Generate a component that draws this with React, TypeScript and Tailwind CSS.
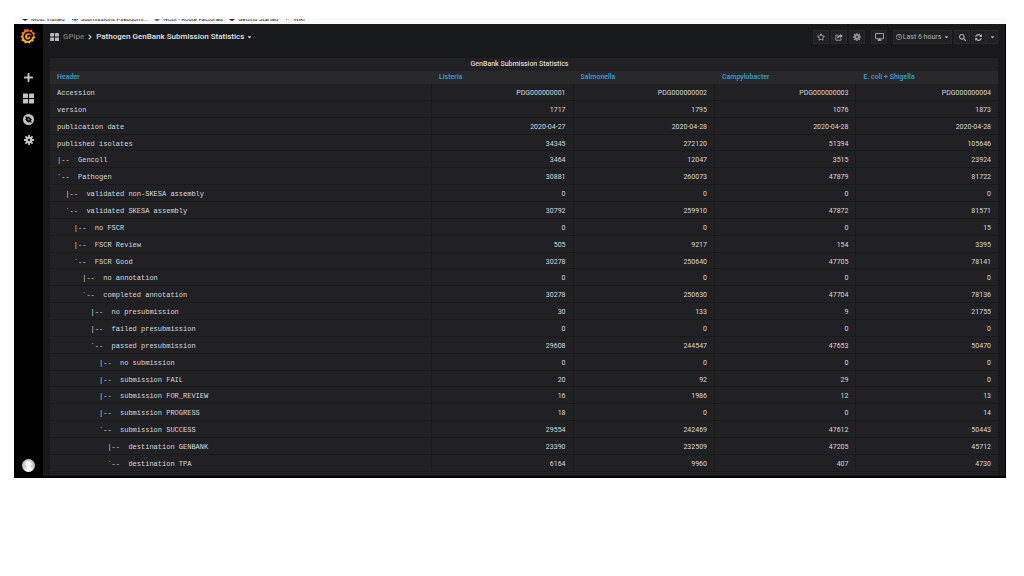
import React from 'react';
import { FaPlus, FaRegStar, FaSearch, FaCaretDown, FaCog, FaRegClock, FaSyncAlt, FaGlobe, FaWikipediaW, FaFirefox, FaChevronRight } from 'react-icons/fa';

interface Row {
  label: string;
  values: string[];
}

const columns = ['Listeria', 'Salmonella', 'Campylobacter', 'E. coli + Shigella'];

const rows: Row[] = [
  { label: 'Accession', values: ['PDG000000001', 'PDG000000002', 'PDG000000003', 'PDG000000004'] },
  { label: 'version', values: ['1717', '1795', '1076', '1873'] },
  { label: 'publication date', values: ['2020-04-27', '2020-04-28', '2020-04-28', '2020-04-28'] },
  { label: 'published isolates', values: ['34345', '272120', '51394', '105646'] },
  { label: '|--  Gencoll', values: ['3464', '12047', '3515', '23924'] },
  { label: '`--  Pathogen', values: ['30881', '260073', '47879', '81722'] },
  { label: '  |--  validated non-SKESA assembly', values: ['0', '0', '0', '0'] },
  { label: '  `--  validated SKESA assembly', values: ['30792', '259910', '47872', '81571'] },
  { label: '    |--  no FSCR', values: ['0', '0', '0', '15'] },
  { label: '    |--  FSCR Review', values: ['505', '9217', '154', '3395'] },
  { label: '    `--  FSCR Good', values: ['30278', '250640', '47705', '78141'] },
  { label: '      |--  no annotation', values: ['0', '0', '0', '0'] },
  { label: '      `--  completed annotation', values: ['30278', '250630', '47704', '78136'] },
  { label: '        |--  no presubmission', values: ['30', '133', '9', '21755'] },
  { label: '        |--  failed presubmission', values: ['0', '0', '0', '0'] },
  { label: '        `--  passed presubmission', values: ['29608', '244547', '47653', '50470'] },
  { label: '          |--  no submission', values: ['0', '0', '0', '0'] },
  { label: '          |--  submission FAIL', values: ['20', '92', '29', '0'] },
  { label: '          |--  submission FOR_REVIEW', values: ['16', '1986', '12', '13'] },
  { label: '          |--  submission PROGRESS', values: ['18', '0', '0', '14'] },
  { label: '          `--  submission SUCCESS', values: ['29554', '242469', '47612', '50443'] },
  { label: '            |--  destination GENBANK', values: ['23390', '232509', '47205', '45712'] },
  { label: '            `--  destination TPA', values: ['6164', '9960', '407', '4730'] },
];

const GrafanaLogo: React.FC = () => (
  <svg viewBox="0 0 32 32" className="w-4 h-4" fill="none">
    <defs>
      <linearGradient id="flame" x1="0" y1="1" x2="0" y2="0">
        <stop offset="0" stopColor="#fcc81c" />
        <stop offset="1" stopColor="#f0562a" />
      </linearGradient>
    </defs>
    <path
      d="M15 1l4 4 5-2 1 5 5 2-2 5 3 4-4 3 0 5-5 0-3 4-4-2-5 2-2-4-5-1 1-5-3-4 3-3-1-5 5-2 1-5 5 1z"
      fill="url(#flame)"
    />
    <path
      d="M25 16c-1-5-5-8-10-7-5 1-8 6-6 11 2 5 8 6 12 2 3-3 1-7-2-7-2 0-4 1-3 3"
      stroke="#000"
      strokeWidth="3"
      strokeLinecap="round"
    />
  </svg>
);

const GridIcon: React.FC<{ className: string }> = ({ className }) => (
  <svg viewBox="0 0 20 18" className={className} fill="currentColor">
    <rect x="0" y="0" width="9" height="8" rx="1" />
    <rect x="11" y="0" width="9" height="8" rx="1" />
    <rect x="0" y="10" width="9" height="8" rx="1" />
    <rect x="11" y="10" width="9" height="8" rx="1" />
  </svg>
);

const ExploreIcon: React.FC = () => (
  <svg viewBox="0 0 20 20" className="w-[11px] h-[11px]">
    <circle cx="10" cy="10" r="10" fill="#c4c4c4" />
    <path d="M4 4l9 3 3 9-9-3z" fill="#000" />
    <path d="M10 4l6 6-6 6-6-6z" fill="#000" />
    <circle cx="10" cy="10" r="2" fill="#777" />
  </svg>
);

const CogIcon: React.FC<{ className: string }> = ({ className }) => (
  <svg viewBox="0 0 22 22" className={className} fill="none" stroke="currentColor">
    <circle cx="11" cy="11" r="5" strokeWidth="5" />
    <path d="M11 0v5M11 17v5M0 11h5M17 11h5M3 3l4 4M15 15l4 4M19 3l-4 4M7 15l-4 4" strokeWidth="4" />
  </svg>
);

const ShareIcon: React.FC = () => (
  <svg viewBox="0 0 20 18" className="w-2 h-[7px]" fill="none" stroke="currentColor" strokeWidth="2">
    <path d="M9 3H2v13h13v-5" />
    <path d="M7 11c0-4 3-6 7-6" strokeWidth="3" />
    <path d="M13 0l7 5-7 5z" fill="currentColor" stroke="none" />
  </svg>
);

const MonitorIcon: React.FC = () => (
  <svg viewBox="0 0 20 18" className="w-[9px] h-2" fill="none" stroke="currentColor" strokeWidth="2">
    <rect x="1" y="1" width="18" height="12" rx="1" />
    <path d="M6 16h8M10 13v3" strokeWidth="3" />
  </svg>
);

const BookmarksBar: React.FC = () => (
  <nav aria-label="Bookmarks" className="h-[6px] bg-[#fafafa] pt-px pl-2 text-[6px] text-[#222]">
    <div className="flex h-[2px] items-end gap-[6px] overflow-hidden leading-[4px]">
      <a href="#visited" className="flex items-end gap-[3px] whitespace-nowrap"><FaCog className="w-[6px] h-[6px]" />Most Visited</a>
      <a href="#submissions" className="flex items-end gap-[2px] whitespace-nowrap"><FaGlobe className="w-2 h-2 text-[#27558c]" />Submissions Pseudomi...</a>
      <a href="#ncbi" className="flex items-end gap-[3px] whitespace-nowrap"><FaGlobe className="w-[6px] h-[6px]" />NCBI - Route Factories</a>
      <a href="#start" className="flex items-end gap-[3px] whitespace-nowrap"><FaFirefox className="w-[6px] h-[6px] text-[#5a1a24]" />Getting Started</a>
      <a href="#wiki" className="flex items-end gap-[2px] whitespace-nowrap"><FaWikipediaW className="w-[7px] h-[7px]" />Wiki</a>
    </div>
  </nav>
);

const Sidebar: React.FC = () => (
  <aside className="flex w-[29px] shrink-0 flex-col items-center bg-black pt-1 pb-[4px] text-[#c4c4c4]">
    <a href="#home" aria-label="Home" className="mr-px"><GrafanaLogo /></a>
    <div className="mt-7 flex flex-col items-center gap-[10px]">
      <button aria-label="Create" className="flex"><FaPlus className="w-[9px] h-[11px]" /></button>
      <button aria-label="Dashboards" className="flex"><GridIcon className="w-[11px] h-[11px]" /></button>
      <button aria-label="Explore" className="flex"><ExploreIcon /></button>
      <button aria-label="Configuration" className="flex"><CogIcon className="w-[10px] h-[10px]" /></button>
    </div>
    <button aria-label="Profile" className="mt-auto flex">
      <svg viewBox="0 0 26 26" className="w-[13px] h-[13px]">
        <circle cx="13" cy="13" r="13" fill="#c9c9c9" />
        <circle cx="13" cy="10" r="6" fill="#fff" />
        <path d="M4 21c2-4 5-5 9-5s7 1 9 5c-5 6-13 6-18 0z" fill="#fff" />
      </svg>
    </button>
  </aside>
);

const navButton =
  'flex h-[14px] items-center justify-center gap-px border border-[#29292b] bg-[#212124] text-[#b4b5b8]';

const Toolbar: React.FC = () => (
  <header className="flex h-[26px] items-center justify-between px-[7px]">
    <div className="flex items-center text-[8px] leading-3 text-[#e3e3e3]">
      <GridIcon className="w-[9px] h-[8px] text-[#b9b9bb]" />
      <a href="#gpipe" className="ml-[4px] text-[#8e8e8e]">GPipe</a>
      <FaChevronRight className="mx-[3px] w-[6px] h-[6px]" />
      <button className="flex items-center gap-[3px] font-medium">
        Pathogen GenBank Submission Statistics
        <FaCaretDown className="w-[5px] h-[6px]" />
      </button>
    </div>
    <div className="flex items-center">
      <div className="flex gap-[2px]">
        <button aria-label="Star" className={`${navButton} w-4`}><FaRegStar className="w-2 h-2" /></button>
        <button aria-label="Share" className={`${navButton} w-4`}><ShareIcon /></button>
        <button aria-label="Settings" className={`${navButton} w-4`}><CogIcon className="w-2 h-2 opacity-80" /></button>
      </div>
      <button aria-label="Cycle view" className={`${navButton} ml-[6px] w-4`}><MonitorIcon /></button>
      <button className={`${navButton} ml-[6px] w-[59px] text-[7px]`}>
        <FaRegClock className="w-[6px] h-[6px]" />
        Last 6 hours
        <FaCaretDown className="ml-[2px] w-[5px] h-[6px]" />
      </button>
      <button aria-label="Zoom out" className={`${navButton} ml-[2px] w-4`}><FaSearch className="w-[7px] h-[7px]" /></button>
      <button aria-label="Refresh" className={`${navButton} ml-px w-[15px]`}><FaSyncAlt className="w-[7px] h-[7px]" /></button>
      <button aria-label="Refresh interval" className={`${navButton} w-3`}><FaCaretDown className="w-[5px] h-[6px]" /></button>
    </div>
  </header>
);

const StatsTable: React.FC = () => (
  <table className="h-[401px] w-full table-fixed border-separate border-spacing-0 text-[7px] leading-[10px] text-[#d8d9da]">
    <thead>
      <tr className="h-[13px] bg-[#29292c] text-left text-[#33a2d4]">
        <th className="w-[40.3%] px-[7px] pb-px font-medium">Header</th>
        {columns.map((name) => (
          <th key={name} className="px-[7px] pb-px font-medium">{name}</th>
        ))}
      </tr>
    </thead>
    <tbody>
      {rows.map((row) => (
        <tr key={row.label}>
          <td className="whitespace-pre border-b border-r border-[#1a1a1c] px-[7px] pt-[2px] font-['Liberation_Mono',monospace]">{row.label}</td>
          {row.values.map((value, i) => (
            <td key={i} className="border-b border-r border-[#1a1a1c] pt-[2px] pr-[7px] text-right last:border-r-[#212124] last:pr-[6px]">{value}</td>
          ))}
        </tr>
      ))}
    </tbody>
  </table>
);

export default function App() {
  return (
    <div className="bg-white pt-[18px] pl-[14px] pr-[18px] font-[Roboto,sans-serif]">
      <BookmarksBar />
      <div className="flex border-b-2 border-r border-black bg-[#18191b]">
        <Sidebar />
        <main className="min-w-0 grow pb-[1px]">
          <Toolbar />
          <section className="mx-[7px] mt-2 bg-[#212125] pb-[3px]">
            <h2 className="h-[13px] pr-[9px] text-center text-[7px] leading-[13px] font-medium text-[#d8d9da]">GenBank Submission Statistics</h2>
            <StatsTable />
          </section>
        </main>
      </div>
    </div>
  );
}
